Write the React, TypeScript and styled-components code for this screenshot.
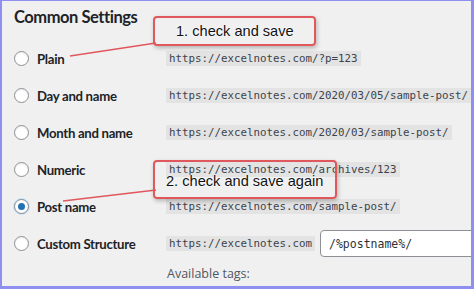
import React from 'react';
import styled, { createGlobalStyle } from 'styled-components';

const GlobalStyle = createGlobalStyle`
	html, body {
		margin: 0;
		padding: 0;
		background: #f0f0f1;
	}
`;

const Frame = styled.div`
	position: relative;
	box-sizing: border-box;
	width: 474px;
	height: 289px;
	overflow: hidden;
	background: #f0f0f1;
	border-style: solid;
	border-color: #8f8ff2;
	border-width: 1px 3px 3px 2px;
	padding-left: 12px;
	font-family: 'Open Sans', 'Noto Sans', sans-serif;
	color: #1d2327;
`;

const Heading = styled.h2`
	margin: 0;
	height: 39px;
	padding-top: 6px;
	box-sizing: border-box;
	font-family: Lato, 'Open Sans', sans-serif;
	font-size: 16.5px;
	font-weight: 700;
	letter-spacing: -0.45px;
	color: #1d2327;
`;

const Options = styled.div`
	display: grid;
	grid-template-columns: 154px 1fr;
	grid-auto-rows: 37px;
	align-items: center;
`;

const Choice = styled.label`
	display: flex;
	align-items: center;
	gap: 8px;
	font-family: Lato, 'Open Sans', sans-serif;
	font-size: 13.2px;
	font-weight: 700;
	letter-spacing: -0.3px;
	white-space: nowrap;
`;

const Radio = styled.span<{ checked?: boolean }>`
	box-sizing: border-box;
	width: 15px;
	height: 15px;
	border-radius: 50%;
	border: 1px solid ${(p) => (p.checked ? '#7e8993' : '#8c8f94')};
	background: #fff;
	display: flex;
	align-items: center;
	justify-content: center;
	box-shadow: ${(p) => (p.checked ? '0 0 0 1px #cfe3f3' : 'inset 0 1px 2px rgba(0,0,0,0.08)')};

	&::after {
		content: '';
		display: ${(p) => (p.checked ? 'block' : 'none')};
		width: 7px;
		height: 7px;
		border-radius: 50%;
		background: #2271b1;
	}
`;

const Example = styled.div`
	display: flex;
	align-items: center;
	gap: 5px;
	margin-left: -2px;
`;

const Code = styled.code`
	font-family: 'DejaVu Sans Mono', 'Liberation Mono', monospace;
	font-size: 10.8px;
	line-height: 15px;
	padding: 0 3px;
	background: #e3e3e4;
	color: #3c434a;
	white-space: nowrap;
`;

const Structure = styled.div`
	box-sizing: border-box;
	flex: none;
	width: 170px;
	height: 27px;
	display: flex;
	align-items: center;
	padding-left: 8px;
	background: #fff;
	border: 1px solid #8c8f94;
	border-radius: 4px;
	font-family: 'DejaVu Sans Mono', 'Liberation Mono', monospace;
	font-size: 11.5px;
	color: #2c3338;
`;

const Tags = styled.div`
	grid-column: 2;
	align-self: start;
	margin-top: 3px;
	margin-left: -1px;
	font-size: 12.5px;
	color: #50575e;
`;

const Callout = styled.div<{ left: number; top: number; w: number; h: number }>`
	position: absolute;
	left: ${(p) => p.left}px;
	top: ${(p) => p.top}px;
	width: ${(p) => p.w}px;
	height: ${(p) => p.h}px;
	box-sizing: border-box;
	border: 2px solid #e0585c;
	border-radius: 4px;
	box-shadow: 1px 2px 4px rgba(0, 0, 0, 0.25);
	display: flex;
	align-items: center;
	font-family: 'Liberation Sans', Arial, sans-serif;
	font-size: 14.6px;
	color: #111;
	text-shadow: 0 0 2px #fff, 0 0 2px #fff;
	white-space: nowrap;
`;

const Pointers = styled.svg`
	position: absolute;
	left: 0;
	top: 0;
	pointer-events: none;
`;

const rows = [
	{ label: 'Plain', url: 'https://excelnotes.com/?p=123' },
	{ label: 'Day and name', url: 'https://excelnotes.com/2020/03/05/sample-post/' },
	{ label: 'Month and name', url: 'https://excelnotes.com/2020/03/sample-post/' },
	{ label: 'Numeric', url: 'https://excelnotes.com/archives/123' },
	{ label: 'Post name', url: 'https://excelnotes.com/sample-post/', checked: true },
];

export default function App() {
	return (
		<>
			<GlobalStyle />
			<Frame>
				<Heading>Common Settings</Heading>
				<Options>
					{rows.map((r) => (
						<React.Fragment key={r.label}>
							<Choice>
								<Radio checked={r.checked} />
								{r.label}
							</Choice>
							<Example>
								<Code>{r.url}</Code>
							</Example>
						</React.Fragment>
					))}
					<Choice>
						<Radio />
						Custom Structure
					</Choice>
					<Example>
						<Code>https://excelnotes.com</Code>
						<Structure>/%postname%/</Structure>
					</Example>
					<Tags>Available tags:</Tags>
				</Options>

				<Pointers width="474" height="289">
					<line x1="68" y1="55" x2="154" y2="42" stroke="#e0585c" strokeWidth="1.6" />
					<line x1="61" y1="200" x2="154" y2="189" stroke="#e0585c" strokeWidth="1.6" />
				</Pointers>
				<Callout left={151} top={15} w={163} h={30} style={{ paddingLeft: 21 }}>
					1. check and save
				</Callout>
				<Callout left={151} top={159} w={184} h={39} style={{ paddingLeft: 11, paddingTop: 3 }}>
					2. check and save again
				</Callout>
			</Frame>
		</>
	);
}
